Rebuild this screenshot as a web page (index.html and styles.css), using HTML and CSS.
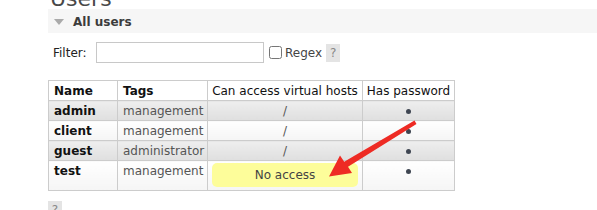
FILE: index.html
```html
<!DOCTYPE html>
<html>

<head>
    <meta charset="utf-8" />
    <title>Users</title>
    <link rel="stylesheet" href="styles.css">
</head>

<body>
    <div class="main">
        <h1>Users</h1>
        <div class="section">
            <div class="section-title">
                <span class="toggle"></span>
                <span>All users</span>
            </div>
            <div class="filter">
                <label class="filter-label">Filter:</label>
                <input type="text" class="filter-input" />
                <label class="regex"><input type="checkbox" class="regex-box" /> Regex</label>
                <span class="help">?</span>
            </div>
            <table class="list">
                <colgroup>
                    <col class="c-name">
                    <col class="c-tags">
                    <col class="c-vhosts">
                    <col class="c-pass">
                </colgroup>
                <thead>
                    <tr>
                        <th class="left">Name</th>
                        <th class="left">Tags</th>
                        <th class="plain">Can access virtual hosts</th>
                        <th class="plain">Has password</th>
                    </tr>
                </thead>
                <tbody>
                    <tr class="alt1">
                        <td class="name">admin</td>
                        <td class="tags">management</td>
                        <td class="vhost">/</td>
                        <td class="pass"><span class="dot"></span></td>
                    </tr>
                    <tr class="alt2">
                        <td class="name">client</td>
                        <td class="tags">management</td>
                        <td class="vhost">/</td>
                        <td class="pass"><span class="dot"></span></td>
                    </tr>
                    <tr class="alt1">
                        <td class="name">guest</td>
                        <td class="tags">administrator</td>
                        <td class="vhost">/</td>
                        <td class="pass"><span class="dot"></span></td>
                    </tr>
                    <tr class="alt2 top">
                        <td class="name">test</td>
                        <td class="tags">management</td>
                        <td class="vhost boxed"><div class="warning">No access</div></td>
                        <td class="pass"><span class="dot"></span></td>
                    </tr>
                </tbody>
            </table>
            <span class="help help-bottom">?</span>
        </div>
    </div>

    <!-- annotation arrow -->
    <svg class="arrow" width="597" height="210" viewBox="0 0 597 210">
        <polygon fill="#ee2b24" points="329,176.5 352,173 348,166.8 416.5,124 414.5,120.5 344.2,161.8 340,155.5" />
    </svg>
</body>

</html>
```

FILE: styles.css
```css
/* base */

body {
    margin: 0;
    font-family: "DejaVu Sans", Verdana, sans-serif;
    font-size: 12px;
    color: #444;
    overflow: hidden;
}

.main {
    padding-left: 48px;
}

h1 {
    font-size: 22px;
    font-weight: normal;
    line-height: 22px;
    color: #484848;
    margin: -12px 0 -1px 2px;
}

/* section */

.section-title {
    display: flex;
    align-items: center;
    gap: 9px;
    height: 24px;
    padding: 1px 0 0 6px;
    box-sizing: border-box;
    background-color: #f6f6f6;
    font-weight: bold;
    color: #3c3c3c;
}

.toggle {
    width: 0;
    height: 0;
    border-left: 5px solid transparent;
    border-right: 5px solid transparent;
    border-top: 6px solid #aaa;
}

.filter {
    display: flex;
    align-items: center;
    height: 21px;
    margin: 9px 0 17px 5px;
    color: #222;
}

.filter-label {
    width: 43px;
}

.filter-input {
    box-sizing: border-box;
    width: 168px;
    height: 21px;
    margin: 0;
    border: 1px solid #c8c8c8;
}

.regex {
    display: flex;
    align-items: center;
    margin-left: 5px;
    color: #444;
}

.regex-box {
    width: 13px;
    height: 13px;
    margin: 0 3px 0 0;
}

.help {
    display: inline-block;
    width: 14px;
    height: 18px;
    line-height: 18px;
    margin-left: 4px;
    text-align: center;
    background-color: #e4e4e4;
    color: #888;
}

.help-bottom {
    margin: 10px 0 0 0;
}

/* table */

table.list {
    border-collapse: collapse;
    table-layout: fixed;
    width: 407px;
}

.c-name { width: 69px; }
.c-tags { width: 90px; }
.c-vhosts { width: 155px; }
.c-pass { width: 92px; }

table.list th,
table.list td {
    border: 1px solid #ccc;
    padding: 3px 5px 2px 5px;
    line-height: 14px;
    white-space: nowrap;
}

table.list th {
    background-color: #fff;
    color: #111;
    font-weight: bold;
}

table.list th.left {
    text-align: left;
}

table.list th.plain {
    font-weight: normal;
    text-align: center;
    padding: 3px 2px 2px 2px;
}

tr.alt1 td {
    background: linear-gradient(#eeeeee, #dfdfdf);
}

tr.alt2 td {
    background: linear-gradient(#ffffff, #f5f5f5);
}

tr.top td {
    vertical-align: top;
}

td.name {
    font-weight: bold;
    color: #111;
}

td.tags {
    color: #555;
}

td.vhost,
td.pass {
    text-align: center;
    color: #555;
}

.dot {
    display: inline-block;
    width: 5px;
    height: 5px;
    border-radius: 50%;
    background-color: #3f4652;
    vertical-align: 1px;
}

table.list td.boxed {
    padding: 2px 4px 3px 4px;
}

.warning {
    height: 24px;
    line-height: 24px;
    border-radius: 5px;
    background-color: #fdfd9a;
    color: #444;
    text-align: center;
}

/* overlay */

.arrow {
    position: absolute;
    left: 0;
    top: 0;
    pointer-events: none;
}
```
